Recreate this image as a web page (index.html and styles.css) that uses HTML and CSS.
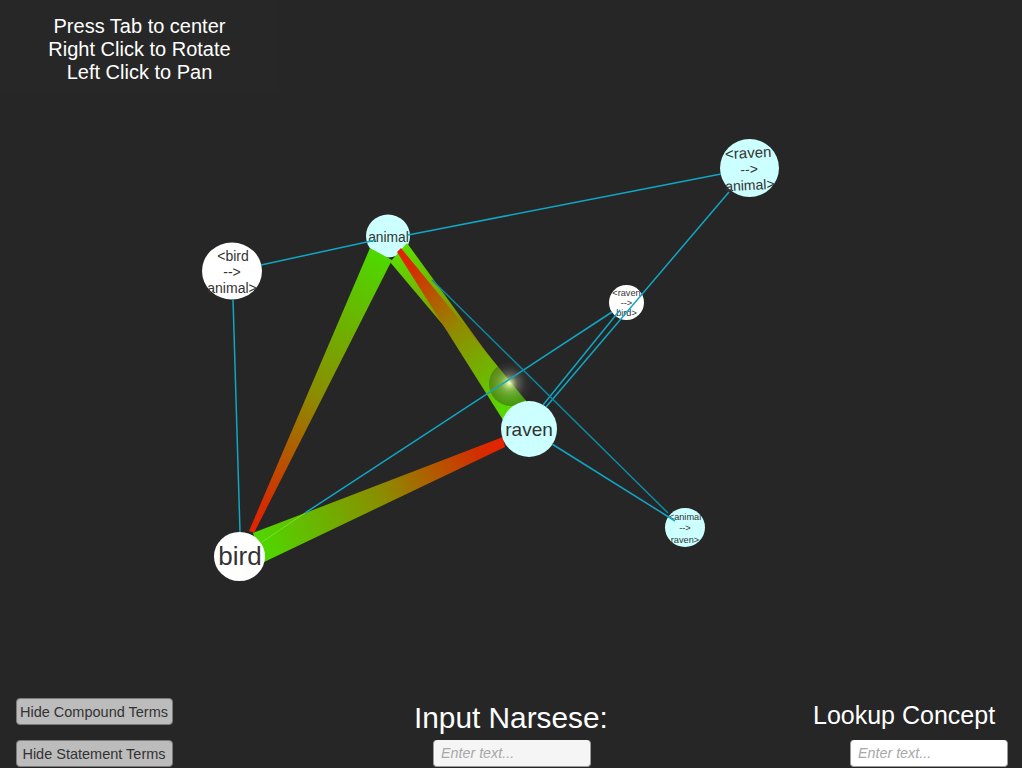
FILE: index.html
```html
<!DOCTYPE html>
<html lang="en">
<head>
<meta charset="utf-8">
<title>Narsese Graph</title>
<link rel="stylesheet" href="styles.css">
</head>
<body>
<main class="app">
  <svg class="graph" viewBox="0 0 1022 768" width="1022" height="768">
    <defs>
      <linearGradient id="gAnimalBird" gradientUnits="userSpaceOnUse" x1="381" y1="255" x2="251" y2="532">
        <stop offset="0" stop-color="#4ed800"/><stop offset="0.5" stop-color="#8a8e00"/><stop offset="0.9" stop-color="#d52d00"/><stop offset="1" stop-color="#e52200"/>
      </linearGradient>
      <linearGradient id="gBirdRaven" gradientUnits="userSpaceOnUse" x1="258" y1="548" x2="504" y2="442">
        <stop offset="0" stop-color="#4ed800"/><stop offset="0.5" stop-color="#8a8e00"/><stop offset="0.9" stop-color="#d52d00"/><stop offset="1" stop-color="#e52200"/>
      </linearGradient>
      <linearGradient id="gAnimalRaven" gradientUnits="userSpaceOnUse" x1="398" y1="251" x2="516" y2="411">
        <stop offset="0" stop-color="#5cde00"/><stop offset="0.5" stop-color="#8a8e00"/><stop offset="1" stop-color="#d52d00"/>
      </linearGradient>
      <linearGradient id="gRavenAnimal" gradientUnits="userSpaceOnUse" x1="399" y1="250" x2="515" y2="411">
        <stop offset="0" stop-color="#e52200"/><stop offset="0.12" stop-color="#d52d00"/><stop offset="0.5" stop-color="#8f8c00"/><stop offset="1" stop-color="#54dc00"/>
      </linearGradient>
      <radialGradient id="gSphere" cx="0.46" cy="0.48" r="0.55">
        <stop offset="0" stop-color="#ffffe0" stop-opacity="0.95"/>
        <stop offset="0.12" stop-color="#d8e8a0" stop-opacity="0.8"/>
        <stop offset="0.35" stop-color="#909880" stop-opacity="0.5"/>
        <stop offset="0.7" stop-color="#404040" stop-opacity="0.35"/>
        <stop offset="1" stop-color="#222222" stop-opacity="0.4"/>
      </radialGradient>
    </defs>

    <ellipse class="node node-cyan" cx="388" cy="236" rx="22" ry="21.5"/>
    <polygon fill="url(#gAnimalBird)" points="370,248 392,260 254,533 249,531"/>
    <polygon fill="url(#gBirdRaven)" points="253,533 262,563 505,447 503,437"/>
    <polygon fill="url(#gAnimalRaven)" points="407,243 390,262 518,414 524,404"/>
    <polygon fill="url(#gRavenAnimal)" points="397,252 401,248 527,402 503,420"/>
    <circle cx="511" cy="384" r="22" fill="url(#gSphere)"/>

    <ellipse class="node node-white" cx="232" cy="271" rx="30" ry="28.5"/>
    <ellipse class="node node-cyan" cx="749.5" cy="168" rx="29.5" ry="29"/>
    <circle class="node node-white" cx="626.5" cy="302.5" r="17.5"/>
    <circle class="node node-cyan" cx="529" cy="429" r="28"/>
    <ellipse class="node node-cyan" cx="685" cy="527.5" rx="20" ry="19.5"/>
    <ellipse class="node node-white" cx="239.5" cy="556.5" rx="25.5" ry="24.5"/>

    <g class="label">
      <text class="t13" x="388.5" y="242">animal</text>
      <text class="t14" x="233" y="261">&lt;bird</text>
      <text class="t14" x="232" y="277">--&gt;</text>
      <text class="t14" x="232" y="293">animal&gt;</text>
      <g transform="rotate(-3 749 168)">
        <text class="t15" x="749" y="158">&lt;raven</text>
        <text class="t14" x="749" y="174">--&gt;</text>
        <text class="t14" x="749" y="190">animal&gt;</text>
      </g>
      <text class="t9" x="626.5" y="296">&lt;raven</text>
      <text class="t9" x="626.5" y="306">--&gt;</text>
      <text class="t9" x="626.5" y="316">bird&gt;</text>
      <text class="t19" x="529" y="436">raven</text>
      <text class="t9" x="685" y="520">&lt;animal</text>
      <text class="t9" x="685" y="531">--&gt;</text>
      <text class="t9" x="685" y="543">raven&gt;</text>
      <text class="t26" x="240" y="565">bird</text>
    </g>

    <g class="edges">
      <line x1="261" y1="265" x2="376" y2="240"/>
      <line x1="408" y1="235" x2="721" y2="174"/>
      <line x1="233" y1="299" x2="240" y2="532"/>
      <line x1="729" y1="192" x2="546" y2="407"/>
      <line x1="620" y1="310" x2="543" y2="405"/>
      <line x1="612" y1="312" x2="305" y2="513"/>
      <line class="edge-faint" x1="305" y1="513" x2="262" y2="542"/>
      <line class="edge-dim" x1="432" y1="280" x2="668" y2="513"/>
      <line x1="552" y1="444" x2="675" y2="521"/>
    </g>
  </svg>

  <header class="help">
    <p>Press Tab to center</p>
    <p>Right Click to Rotate</p>
    <p>Left Click to Pan</p>
  </header>

  <footer class="controls">
    <div class="toggles">
      <button class="btn" type="button">Hide Compound Terms</button>
      <button class="btn" type="button">Hide Statement Terms</button>
    </div>
    <div class="field field-narsese">
      <label class="title title-lg" for="narsese">Input Narsese:</label>
      <input class="entry entry-dim" id="narsese" type="text" placeholder="Enter text...">
    </div>
    <div class="field field-lookup">
      <label class="title title-md" for="lookup">Lookup Concept</label>
      <input class="entry" id="lookup" type="text" placeholder="Enter text...">
    </div>
  </footer>
</main>
</body>
</html>
```
FILE: styles.css
```css
* { box-sizing: border-box; }
html, body { margin: 0; padding: 0; height: 100%; }
body { background: #262626; font-family: "Liberation Sans", Arial, sans-serif; overflow: hidden; }

.app {
  position: relative;
  width: 1022px;
  height: 768px;
  display: flex;
  flex-direction: column;
  justify-content: space-between;
}

.graph { position: absolute; inset: 0; display: block; }
.node-white { fill: #ffffff; }
.node-cyan { fill: #ccffff; }
.label text { fill: #333333; text-anchor: middle; font-family: "Liberation Sans", Arial, sans-serif; }
.t9 { font-size: 9.2px; }
.t13 { font-size: 13.8px; }
.t14 { font-size: 14px; }
.t15 { font-size: 15px; }
.t19 { font-size: 19px; }
.t26 { font-size: 26px; }
.edges line { stroke: #10a6c4; stroke-width: 1.5; }
.edges .edge-dim { stroke: #0e8aa3; }
.edges .edge-faint { stroke: #74e22a; stroke-width: 1; }

.help {
  position: relative;
  width: 279px;
  height: 93px;
  padding-top: 15px;
  background: #272727;
  color: #ffffff;
  font-size: 20px;
  line-height: 23px;
  text-align: center;
}
.help p { margin: 0; }

.controls {
  position: relative;
  display: grid;
  grid-template-columns: 398.5px 194px 1fr;
  align-items: end;
  padding: 0 14px 1px 15.5px;
}
.toggles { display: flex; flex-direction: column; gap: 15px; width: 157px; }
.btn {
  height: 27px;
  padding: 0;
  border: 1px solid #7a7a7a;
  border-radius: 4px;
  background: #bcbcbc;
  color: #333333;
  font: 14.5px "Liberation Sans", Arial, sans-serif;
}
.field { display: flex; flex-direction: column; }
.field-narsese { align-items: flex-start; }
.field-narsese .entry { align-self: flex-end; margin-right: 17px; }
.field-lookup { justify-self: end; width: 195px; align-items: flex-end; }
.field-lookup .title { align-self: flex-start; }
.title { color: #ffffff; white-space: nowrap; }
.title-lg { font-size: 29.8px; line-height: 32px; margin-bottom: 6px; }
.title-md { font-size: 25px; line-height: 28px; margin-bottom: 11px; }
.entry {
  width: 158px;
  height: 27px;
  padding: 0 7px;
  border: 1px solid #9a9a9a;
  border-width: 0 1px 1px 1px;
  border-radius: 4px;
  background: #ffffff;
  font: italic 14.3px "Liberation Sans", Arial, sans-serif;
  color: #333333;
}
.entry-dim { background: #f5f5f5; }
.entry::placeholder { color: #a8a8a8; opacity: 1; }
```
